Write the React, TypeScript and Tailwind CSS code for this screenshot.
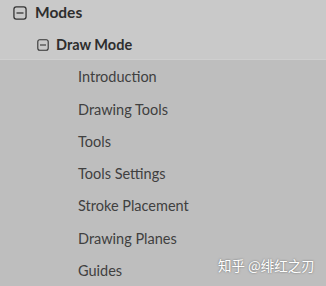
const items = ['Introduction', 'Drawing Tools', 'Tools', 'Tools Settings', 'Stroke Placement', 'Drawing Planes', 'Guides']

function Minus({ size }: { size: number }) {
  return (
    <svg width={size} height={size} viewBox="0 0 12 12" fill="none" stroke="#333" strokeWidth="1.1">
      <rect x="0.8" y="0.8" width="10.4" height="10.4" rx="2" />
      <line x1="3" y1="6" x2="9" y2="6" />
    </svg>
  )
}

export default function App() {
  return (
    <div className="relative w-[326px] h-[286px] overflow-hidden bg-[#bebebe] font-['Lato',sans-serif]">
      <div className="bg-[#c9c9c9] h-[60px] border-b border-[#cfcfcf]">
        <div className="flex items-center h-[26px] pl-[13px] gap-[8px] text-[15.5px] font-bold text-[#2e2e2e]">
          <Minus size={14} />
          <span>Modes</span>
        </div>
        <div className="flex items-center h-[38px] pl-[37px] gap-[7px] text-[14.5px] font-bold text-[#2e2e2e]">
          <Minus size={12} />
          <span>Draw Mode</span>
        </div>
      </div>
      <div className="flex flex-col pl-[78px] pt-[1px]">
        {items.map(t => (
          <div key={t} className="h-[32.3px] flex items-center text-[14.5px] text-[#404040]">{t}</div>
        ))}
      </div>
      <div className="absolute left-[218px] top-[255px] text-[13.5px] text-white font-['Noto_Sans_CJK_SC',sans-serif] [text-shadow:0_0_2px_rgba(0,0,0,0.5)]">
        知乎 @绯红之刃
      </div>
    </div>
  )
}
